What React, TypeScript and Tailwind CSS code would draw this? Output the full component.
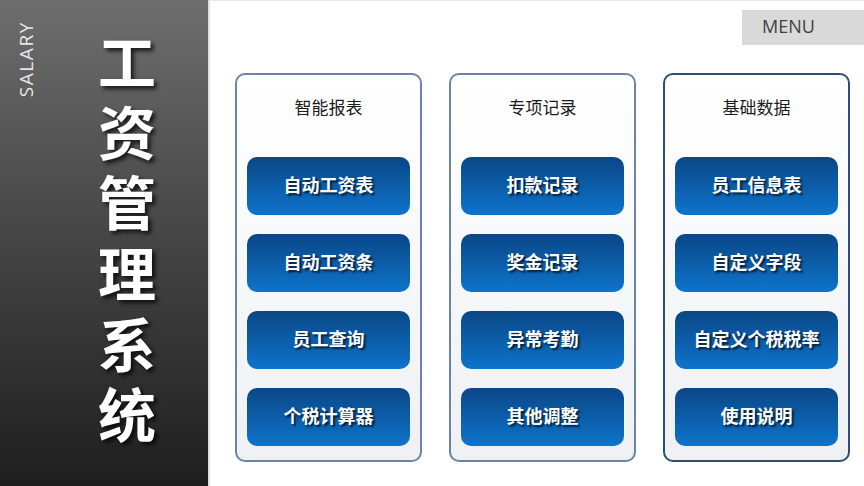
import React from "react";

const cards = [
  { title: "智能报表", items: ["自动工资表", "自动工资条", "员工查询", "个税计算器"], border: "border-[#6a84a8]" },
  { title: "专项记录", items: ["扣款记录", "奖金记录", "异常考勤", "其他调整"], border: "border-[#6a84a8]" },
  { title: "基础数据", items: ["员工信息表", "自定义字段", "自定义个税税率", "使用说明"], border: "border-[#2c4d74]" },
];

const cjk = { fontFamily: '"Noto Sans CJK SC", "Noto Sans", sans-serif' };

export default function App() {
  return (
    <div className="w-[864px] h-[486px] flex bg-white overflow-hidden" style={cjk}>
      <div className="w-[208px] h-full flex shrink-0 bg-gradient-to-b from-[#6e6e6e] to-[#1f1f1f]">
        <div className="w-[52px] flex justify-center pt-[21px]">
          <span
            className="[writing-mode:vertical-rl] rotate-180 text-[19px] leading-none tracking-[1.6px] text-[#e6e6e6] h-fit"
            style={{ fontFamily: '"Open Sans", sans-serif' }}
          >
            SALARY
          </span>
        </div>
        <div className="flex flex-col items-center pt-[24px] ml-[46px] w-[58px]">
          {"工资管理系统".split("").map((c) => (
            <div key={c} className="h-[70.6px] flex items-center justify-center overflow-visible">
              <span className="text-[58px] leading-[58px] font-bold text-white [text-shadow:3px_3px_4px_rgba(0,0,0,0.75)]">
                {c}
              </span>
            </div>
          ))}
        </div>
      </div>
      <div className="w-[2px] h-full bg-[#dedede]" />
      <div className="flex-1 flex flex-col border-t border-[#e8e8e8]">
        <div className="flex justify-end pt-[9px]">
          <div
            className="w-[122px] h-[35px] bg-[#d9d9d9] flex items-center pl-[20px] pb-[2px] text-[18px] text-[#404040]"
            style={{ fontFamily: '"Open Sans", sans-serif' }}
          >
            MENU
          </div>
        </div>
        <div className="flex gap-[27px] pl-[25px] mt-[28px]">
          {cards.map((card) => (
            <div
              key={card.title}
              className={`w-[187px] h-[389px] rounded-[10px] border-2 ${card.border} bg-gradient-to-b from-white to-[#eef0f3] flex flex-col px-[10px]`}
            >
              <div className="h-[82px] flex items-center justify-center text-[17px] text-[#1a1a1a] pb-[18px]">
                {card.title}
              </div>
              <div className="flex flex-col gap-[19px]">
                {card.items.map((it) => (
                  <div
                    key={it}
                    className="h-[58px] rounded-[10px] bg-gradient-to-b from-[#0a4787] to-[#0d74cc] flex items-center justify-center pb-[3px] text-white font-bold text-[18px] [text-shadow:2px_2px_2px_rgba(0,0,0,0.7)]"
                  >
                    {it}
                  </div>
                ))}
              </div>
            </div>
          ))}
        </div>
      </div>
    </div>
  );
}
